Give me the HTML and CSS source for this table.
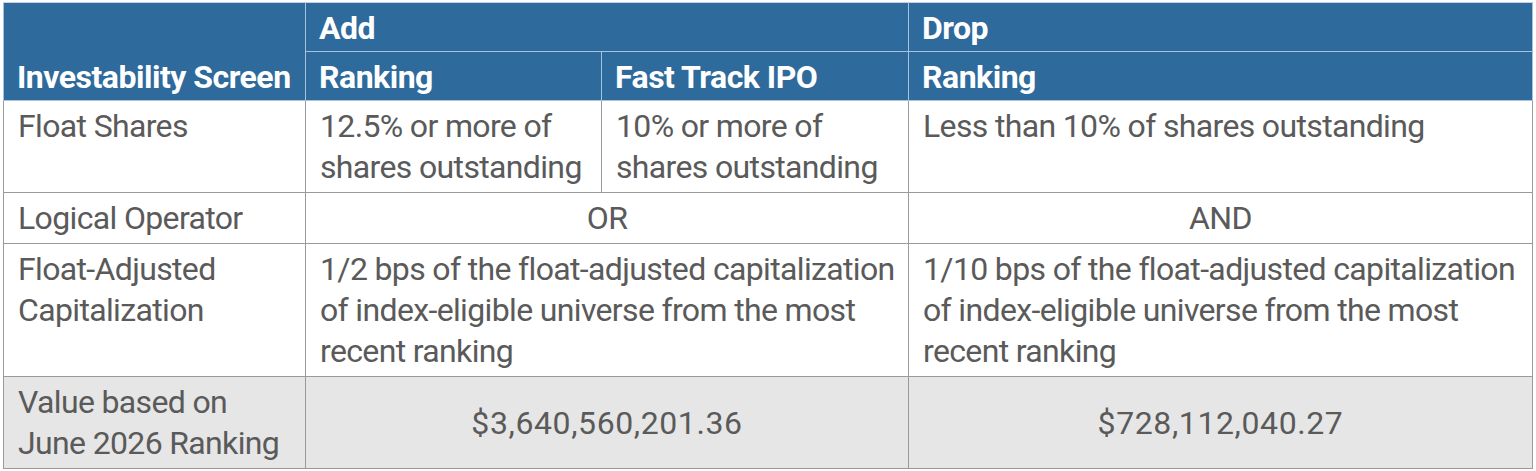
FILE: index.html
```html
<!DOCTYPE html>
<html lang="en">
<head>
<meta charset="utf-8">
<link rel="stylesheet" href="styles.css">
</head>
<body>
<table class="screen">
  <colgroup>
    <col class="c1"><col class="c2"><col class="c3"><col class="c4">
  </colgroup>
  <thead>
    <tr>
      <th rowspan="2">Investability Screen</th>
      <th colspan="2">Add</th>
      <th>Drop</th>
    </tr>
    <tr>
      <th>Ranking</th>
      <th>Fast Track IPO</th>
      <th>Ranking</th>
    </tr>
  </thead>
  <tbody>
    <tr>
      <td>Float Shares</td>
      <td>12.5% or more of<br>shares outstanding</td>
      <td>10% or more of<br>shares outstanding</td>
      <td>Less than 10% of shares outstanding</td>
    </tr>
    <tr>
      <td>Logical Operator</td>
      <td colspan="2" class="center">OR</td>
      <td class="center">AND</td>
    </tr>
    <tr>
      <td>Float-Adjusted<br>Capitalization</td>
      <td colspan="2">1/2 bps of the float-adjusted capitalization<br>of index-eligible universe from the most<br>recent ranking</td>
      <td>1/10 bps of the float-adjusted capitalization<br>of index-eligible universe from the most<br>recent ranking</td>
    </tr>
    <tr class="value">
      <td>Value based on<br>June 2026 Ranking</td>
      <td colspan="2" class="center middle amount">$3,640,560,201.36</td>
      <td class="center middle amount">$728,112,040.27</td>
    </tr>
  </tbody>
</table>
</body>
</html>
```
FILE: styles.css
```css
html, body {
  margin: 0;
  padding: 0;
  background: #ffffff;
}
body {
  padding: 2px 3px;
}
.screen {
  border-collapse: collapse;
  table-layout: fixed;
  width: 1529px;
  font-family: Roboto, "Liberation Sans", sans-serif;
  font-size: 32px;
  line-height: 41px;
  color: #5a5a5a;
}
.c1 { width: 302px; }
.c2 { width: 296px; }
.c3 { width: 307px; }
.c4 { width: 624px; }
.screen th {
  background: #2e6a9b;
  color: #ffffff;
  font-weight: 700;
  text-align: left;
  vertical-align: bottom;
  padding: 5px 10px 2px 13px;
  border: 1px solid #a6c2dc;
  letter-spacing: -0.5px;
  white-space: nowrap;
}
.screen thead tr:first-child th {
  border-top-color: #c9d3dc;
}
.screen td {
  border: 1px solid #9a9a9a;
  padding: 5px 8px 4px 14px;
  vertical-align: top;
  letter-spacing: -0.65px;
  white-space: nowrap;
}
.screen td.center {
  text-align: center;
  padding-left: 8px;
}
.screen td.middle {
  vertical-align: middle;
}
.screen td.amount {
  letter-spacing: 0.6px;
}
.screen tr.value td {
  background: #e6e6e6;
}
```
